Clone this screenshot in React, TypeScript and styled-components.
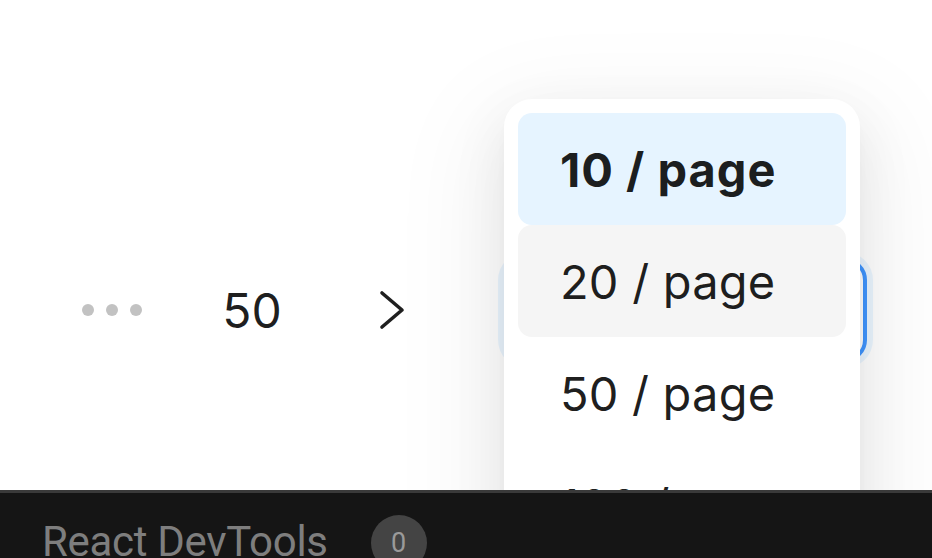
import React from 'react';
import styled, { createGlobalStyle } from 'styled-components';

const GlobalStyle = createGlobalStyle`
    html, body {
        margin: 0;
        padding: 0;
        background: #ffffff;
    }
    body {
        font-family: Inter, "Noto Sans", "Liberation Sans", sans-serif;
    }
`;

const Stage = styled.div`
    position: relative;
    width: 932px;
    height: 558px;
    overflow: hidden;
    display: flex;
    flex-direction: column;
    background: #ffffff;
`;

const Main = styled.div`
    flex: 1;
    display: flex;
    align-items: flex-start;
    padding-top: 254px;
`;

const Pagination = styled.ul`
    display: flex;
    align-items: center;
    margin: 0;
    padding: 0 0 0 56px;
    list-style: none;
`;

const Item = styled.li`
    width: 112px;
    height: 112px;
    margin-right: 28px;
    display: flex;
    align-items: center;
    justify-content: center;
    border-radius: 21px;
    font-size: 48px;
    color: rgba(0, 0, 0, 0.88);
`;

const Dots = styled.span`
    display: flex;
    gap: 12px;
`;

const Dot = styled.span`
    width: 12px;
    height: 12px;
    border-radius: 50%;
    background: #c2c2c2;
`;

const Options = styled.li`
    margin-left: 28px;
`;

// the open select, almost all of it under the dropdown
const SelectBox = styled.div`
    width: 363px;
    height: 104px;
    box-sizing: border-box;
    border: 4px solid #4096ff;
    border-radius: 22px;
    box-shadow: 0 0 0 6px rgba(5, 145, 255, 0.08);
`;

const Dropdown = styled.div`
    position: absolute;
    left: 504px;
    top: 99px;
    width: 356px;
    height: 480px;
    box-sizing: border-box;
    padding: 14px;
    background: #ffffff;
    border-radius: 28px;
    box-shadow: 0 21px 56px 0 rgba(0, 0, 0, 0.08), 0 10px 21px -14px rgba(0, 0, 0, 0.12),
        0 31px 98px 28px rgba(0, 0, 0, 0.05);
`;

const Option = styled.div<{ $selected?: boolean; $hover?: boolean }>`
    height: 112px;
    display: flex;
    align-items: center;
    padding: 0 42px;
    border-radius: 14px;
    font-size: 47px;
    color: rgba(0, 0, 0, 0.88);
    font-weight: ${(p) => (p.$selected ? 700 : 400)};
    letter-spacing: ${(p) => (p.$selected ? '1px' : '0.2px')};
    background: ${(p) => (p.$selected ? '#e6f4ff' : p.$hover ? '#f5f5f5' : 'transparent')};
`;

const DevBar = styled.div`
    position: relative;
    z-index: 2;
    height: 68px;
    border-top: 3px solid #3a3a3a;
    background: #151515;
    display: flex;
    align-items: flex-start;
    padding: 25px 0 0 42px;
    gap: 43px;
    box-sizing: border-box;
    flex-shrink: 0;
    overflow: hidden;
`;

const DevTitle = styled.span`
    font-family: Roboto, "Liberation Sans", sans-serif;
    font-size: 42px;
    line-height: 48px;
    color: #7e7e7e;
    letter-spacing: -0.3px;
    white-space: nowrap;
`;

const Badge = styled.span`
    width: 56px;
    height: 56px;
    margin-top: -3px;
    border-radius: 50%;
    background: #444444;
    color: #9a9a9a;
    font-family: Roboto, "Liberation Sans", sans-serif;
    font-size: 27px;
    display: flex;
    align-items: center;
    justify-content: center;
    flex-shrink: 0;
`;

const Chevron = () => (
    <svg width="30" height="40" viewBox="0 0 30 40" fill="none">
        <polyline
            points="5,3 25,20 5,37"
            stroke="rgba(0,0,0,0.88)"
            strokeWidth="3.6"
            strokeLinecap="round"
            strokeLinejoin="round"
        />
    </svg>
);

const sizes = [10, 20, 50, 100];

export default function App() {
    return (
        <>
            <GlobalStyle />
            <Stage>
                <Main>
                    <Pagination>
                        <Item>
                            <Dots>
                                <Dot />
                                <Dot />
                                <Dot />
                            </Dots>
                        </Item>
                        <Item>50</Item>
                        <Item>
                            <Chevron />
                        </Item>
                        <Options>
                            <SelectBox />
                        </Options>
                    </Pagination>
                </Main>
                <Dropdown>
                    {sizes.map((s, i) => (
                        <Option key={s} $selected={i === 0} $hover={i === 1}>
                            {s} / page
                        </Option>
                    ))}
                </Dropdown>
                <DevBar>
                    <DevTitle>React DevTools</DevTitle>
                    <Badge>0</Badge>
                </DevBar>
            </Stage>
        </>
    );
}
